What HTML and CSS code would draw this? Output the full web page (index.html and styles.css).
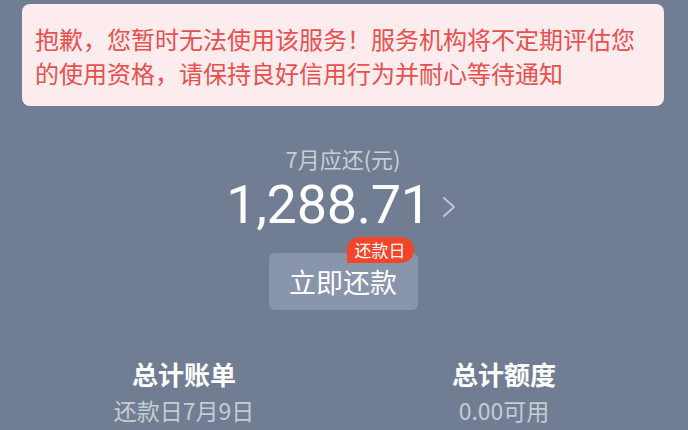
FILE: index.html
```html
<!DOCTYPE html>
<html lang="zh-CN">
<head>
<meta charset="utf-8">
<link rel="stylesheet" href="styles.css">
</head>
<body>
<div class="page">
  <div class="notice">抱歉，您暂时无法使用该服务！服务机构将不定期评估您的使用资格，请保持良好信用行为并耐心等待通知</div>
  <div class="due">
    <div class="due-label">7月应还(元)</div>
    <div class="amount-row">
      <span class="amount">1,288.71</span>
      <svg class="chev" width="14" height="22" viewBox="0 0 14 22"><path d="M2 2 L12 11 L2 20" fill="none" stroke="#c3cad6" stroke-width="1.8" stroke-linecap="round" stroke-linejoin="round"/></svg>
    </div>
    <div class="pay-btn">立即还款<span class="badge">还款日</span></div>
  </div>
  <div class="stats">
    <div class="stat">
      <div class="stat-title">总计账单</div>
      <div class="stat-sub">还款日7月9日</div>
    </div>
    <div class="stat">
      <div class="stat-title">总计额度</div>
      <div class="stat-sub">0.00可用</div>
    </div>
  </div>
</div>
</body>
</html>
```
FILE: styles.css
```css
html, body {
  margin: 0;
  padding: 0;
  background: #707d92;
  width: 688px;
  height: 430px;
  overflow: hidden;
}
body {
  font-family: "Noto Sans CJK SC", "Noto Sans", sans-serif;
}
.page {
  padding: 4px 24px 0 22px;
}
.notice {
  background: #fdeced;
  border-radius: 8px;
  color: #e8504e;
  font-size: 24px;
  line-height: 34px;
  padding: 18px 13px 16px 13px;
  height: 68px;
}
.due {
  display: flex;
  flex-direction: column;
  align-items: center;
}
.due-label {
  margin-top: 37px;
  font-size: 22px;
  line-height: 30px;
  color: #c8ced8;
}
.amount-row {
  display: flex;
  align-items: center;
  gap: 11px;
  margin-top: 2px;
  height: 60px;
  padding-right: 4px;
}
.amount {
  font-family: "Roboto", "Noto Sans", sans-serif;
  font-size: 54px;
  line-height: 60px;
  color: #ffffff;
  letter-spacing: -0.3px;
}
.chev {
  margin-top: 4px;
}
.pay-btn {
  position: relative;
  margin-top: 18px;
  width: 149px;
  height: 57px;
  border-radius: 6px;
  background: #8995aa;
  color: #ffffff;
  font-size: 27px;
  display: flex;
  align-items: center;
  justify-content: center;
}
.badge {
  position: absolute;
  top: -16px;
  right: 4px;
  width: 67px;
  height: 26px;
  background: #f2452a;
  border-radius: 13px 13px 13px 0;
  color: #ffffff;
  font-size: 17px;
  line-height: 26px;
  text-align: center;
}
.stats {
  display: grid;
  grid-template-columns: 1fr 1fr;
  margin-top: 47px;
  padding-left: 2px;
}
.stat {
  text-align: center;
}
.stat-title {
  font-size: 26px;
  line-height: 34px;
  font-weight: 700;
  color: #ffffff;
}
.stat-sub {
  margin-top: 4px;
  font-size: 23px;
  line-height: 30px;
  color: #c6ccd6;
}
```
